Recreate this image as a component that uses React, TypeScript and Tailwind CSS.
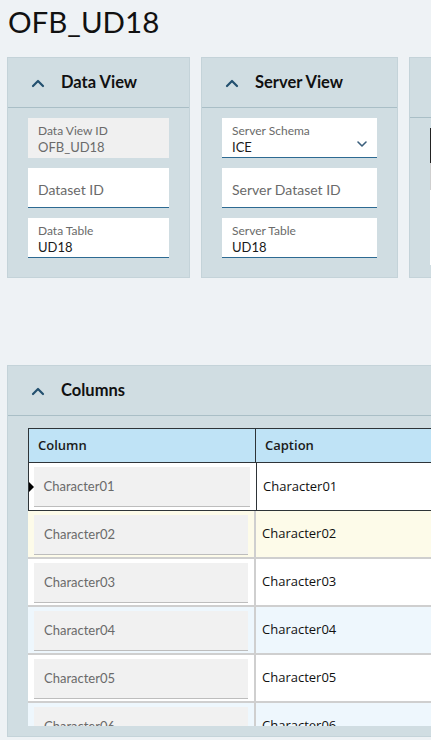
import React from "react";

const font = { fontFamily: "Lato, 'Open Sans', sans-serif" } as const;

function Chevron() {
  return (
    <svg width="14" height="10" viewBox="0 0 14 10" className="shrink-0">
      <path d="M2 8 L7 3 L12 8" fill="none" stroke="#23506f" strokeWidth="2.2" strokeLinecap="round" strokeLinejoin="round" />
    </svg>
  );
}

function PanelHeader({ title, h = "h-[50px]" }: { title: string; h?: string }) {
  return (
    <div className={`${h} flex items-center gap-[16px] pl-[23px] border-b border-[#a9bec6]`}>
      <Chevron />
      <span className="text-[16.5px] font-bold text-[#111]">{title}</span>
    </div>
  );
}

function LabeledField({ label, value, readOnly, select }: { label: string; value: string; readOnly?: boolean; select?: boolean }) {
  return (
    <div
      className={`relative h-[40px] px-[10px] pt-[5px] ${readOnly ? "bg-[#f0f0f0]" : "bg-white border-b-[1.5px] border-[#2d6a92]"}`}
    >
      <div className="text-[12px] leading-[15px] text-[#6a6a6a]">{label}</div>
      <div className={`text-[13px] leading-[18px] ${readOnly ? "text-[#6a6a6a]" : "text-[#1a1a1a]"}`}>{value}</div>
      {select && (
        <svg width="12" height="8" viewBox="0 0 12 8" className="absolute right-[9px] top-[22px]">
          <path d="M2 2 L6 6 L10 2" fill="none" stroke="#3b5f7c" strokeWidth="1.6" strokeLinecap="round" strokeLinejoin="round" />
        </svg>
      )}
    </div>
  );
}

function PlaceholderField({ text }: { text: string }) {
  return (
    <div className="h-[40px] px-[10px] pt-[3px] flex items-center bg-white border-b-[1.5px] border-[#2d6a92]">
      <span className="text-[14px] text-[#6a6a6a]">{text}</span>
    </div>
  );
}

const rows = [
  { n: "01", bg: "bg-white", sel: true },
  { n: "02", bg: "bg-[#fdfbe9]" },
  { n: "03", bg: "bg-white" },
  { n: "04", bg: "bg-[#eef7fd]" },
  { n: "05", bg: "bg-white" },
  { n: "06", bg: "bg-[#eef7fd]" },
];

export default function App() {
  return (
    <div className="w-[431px] h-[740px] overflow-hidden bg-[#eef2f5]" style={font}>
      <h1 className="pl-[8px] pt-[4px] h-[57px] text-[29.5px] leading-[36px] text-[#111]">OFB_UD18</h1>

      <div className="flex gap-[11px] pl-[7px] w-[700px]">
        <div className="w-[183px] h-[221px] bg-[#d0dde2] border border-[#c4d3d9]">
          <PanelHeader title="Data View" />
          <div className="flex flex-col gap-[10px] px-[20px] pt-[10px]">
            <LabeledField label="Data View ID" value="OFB_UD18" readOnly />
            <PlaceholderField text="Dataset ID" />
            <LabeledField label="Data Table" value="UD18" />
          </div>
        </div>

        <div className="w-[197px] h-[221px] bg-[#d0dde2] border border-[#c4d3d9]">
          <PanelHeader title="Server View" />
          <div className="flex flex-col gap-[10px] px-[20px] pt-[10px]">
            <LabeledField label="Server Schema" value="ICE" select />
            <PlaceholderField text="Server Dataset ID" />
            <LabeledField label="Server Table" value="UD18" />
          </div>
        </div>

        <div className="w-[250px] h-[221px] bg-[#d0dde2] border border-[#c4d3d9]">
          <div className="h-[60px] border-b border-[#a9bec6]" />
          <div className="pl-[20px] pt-[10px]">
            <div className="h-[35px] bg-[#222]" />
            <div className="h-[27px] bg-[#cfcfcf]" />
            <div className="h-[75px] bg-white" />
          </div>
        </div>
      </div>

      <div className="mt-[87px] ml-[7px] w-[600px] h-[372px] bg-[#d0dde2] border border-[#c4d3d9]">
        <PanelHeader title="Columns" />
        <div className="pl-[20px] pt-[12px]">
          <div className="h-[298px] overflow-hidden">
            <div className="flex h-[35px] bg-[#bfe3f6] border-[1.5px] border-[#2e3438] text-[13px] text-[#1a1a1a]" style={{ fontFamily: "'Open Sans', sans-serif" }}>
              <div className="w-[227px] flex items-center pl-[9px] border-r-[1.5px] border-[#2e3438] font-semibold">Column</div>
              <div className="flex-1 flex items-center pl-[9px] font-semibold">Caption</div>
            </div>
            {rows.map((r) => (
              <div
                key={r.n}
                className={`relative flex h-[48px] ${r.bg} ${r.sel ? "border-l-[1.5px] border-b-[1.5px] border-[#2e3438]" : "border-b-2 border-[#cfcfcf]"}`}
              >
                {r.sel && (
                  <div className="absolute left-0 top-[19px] w-0 h-0 border-y-[5px] border-y-transparent border-l-[5px] border-l-black" />
                )}
                <div className={`w-[228px] ${r.sel ? "pl-[4.5px]" : "pl-[6px]"} pr-[6px] pt-[4px] ${r.sel ? "border-r-[1.5px] border-[#2e3438]" : "border-r-2 border-[#cfcfcf]"}`}>
                  <div className="h-[40px] bg-[#f1f1f1] border-b border-[#bdbdbd] flex items-center pl-[10px] text-[13px] text-[#6a6a6a]">
                    Character{r.n}
                  </div>
                </div>
                <div className="flex-1 flex items-center pl-[6px] text-[13px] text-[#111]" style={{ fontFamily: "'Open Sans', sans-serif" }}>
                  Character{r.n}
                </div>
              </div>
            ))}
          </div>
        </div>
      </div>
    </div>
  );
}
